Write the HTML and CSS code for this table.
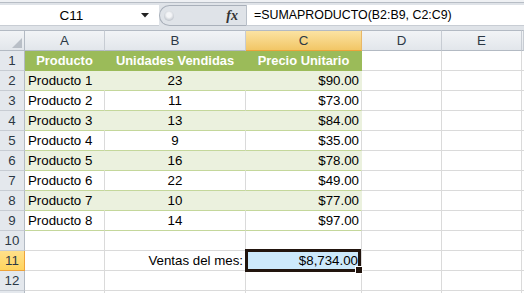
FILE: index.html
```html
<!DOCTYPE html>
<html lang="es">
<head>
<meta charset="utf-8">
<title>SUMAPRODUCTO</title>
<link rel="stylesheet" href="styles.css">
</head>
<body>
<div class="fbar">
  <div class="namebox">
    <span class="name">C11</span>
    <svg class="arrow" width="8" height="5" viewBox="0 0 8 5"><polygon points="0,0 8,0 4,4.5" fill="#222"/></svg>
  </div>
  <div class="splitter">
    <span class="grip"></span>
    <span class="fx">fx</span>
  </div>
  <div class="formula">=SUMAPRODUCTO(B2:B9, C2:C9)</div>
</div>
<div class="sheet">
  <div class="corner"><svg width="10" height="10" viewBox="0 0 10 10"><polygon points="10,0 10,10 0,10" fill="#b9bfc7"/></svg></div>
  <div class="h">A</div><div class="h">B</div><div class="h hsel">C</div><div class="h">D</div><div class="h">E</div><div class="h"></div>

  <div class="r">1</div><div class="c th">Producto</div><div class="c th">Unidades Vendidas</div><div class="c th">Precio Unitario</div><div class="c"></div><div class="c"></div><div class="c"></div>

  <div class="r">2</div><div class="c g">Producto 1</div><div class="c g ctr">23</div><div class="c g rt">$90.00</div><div class="c"></div><div class="c"></div><div class="c"></div>
  <div class="r">3</div><div class="c w">Producto 2</div><div class="c w ctr">11</div><div class="c w rt">$73.00</div><div class="c"></div><div class="c"></div><div class="c"></div>
  <div class="r">4</div><div class="c g">Producto 3</div><div class="c g ctr">13</div><div class="c g rt">$84.00</div><div class="c"></div><div class="c"></div><div class="c"></div>
  <div class="r">5</div><div class="c w">Producto 4</div><div class="c w ctr">9</div><div class="c w rt">$35.00</div><div class="c"></div><div class="c"></div><div class="c"></div>
  <div class="r">6</div><div class="c g">Producto 5</div><div class="c g ctr">16</div><div class="c g rt">$78.00</div><div class="c"></div><div class="c"></div><div class="c"></div>
  <div class="r">7</div><div class="c w">Producto 6</div><div class="c w ctr">22</div><div class="c w rt">$49.00</div><div class="c"></div><div class="c"></div><div class="c"></div>
  <div class="r">8</div><div class="c g">Producto 7</div><div class="c g ctr">10</div><div class="c g rt">$77.00</div><div class="c"></div><div class="c"></div><div class="c"></div>
  <div class="r">9</div><div class="c w">Producto 8</div><div class="c w ctr">14</div><div class="c w rt">$97.00</div><div class="c"></div><div class="c"></div><div class="c"></div>

  <div class="r">10</div><div class="c"></div><div class="c"></div><div class="c"></div><div class="c"></div><div class="c"></div><div class="c"></div>
  <div class="r rsel">11</div><div class="c"></div><div class="c rt">Ventas del mes:</div><div class="c rt sel">$8,734.00</div><div class="c"></div><div class="c"></div><div class="c"></div>
  <div class="r">12</div><div class="c"></div><div class="c"></div><div class="c"></div><div class="c"></div><div class="c"></div><div class="c"></div>
  <div class="r"></div><div class="c"></div><div class="c"></div><div class="c"></div><div class="c"></div><div class="c"></div><div class="c"></div>
</div>
</body>
</html>
```
FILE: styles.css
```css
* { box-sizing: border-box; }
html, body { margin: 0; padding: 0; }
body {
  width: 524px;
  height: 293px;
  overflow: hidden;
  background: #fff;
  font-family: "Liberation Sans", Arial, sans-serif;
  font-size: 13.3px;
  color: #000;
}

/* formula bar */
.fbar {
  display: flex;
  height: 30px;
  padding-top: 5px;
  padding-bottom: 4px;
  background: linear-gradient(#eef0f3 0 2px, #b7bdc5 2px 3px, #dfe3e8 3px);
}
.namebox {
  width: 159px;
  background: #fff;
  border-bottom: 1px solid #c8cdd4;
  display: flex;
  align-items: center;
  position: relative;
}
.name {
  width: 143px;
  text-align: center;
  font-size: 13.5px;
}
.arrow { margin-left: -2px; }
.splitter {
  width: 87px;
  display: flex;
  align-items: center;
  justify-content: space-between;
  background: #dfe3e8;
  border: 1px solid #a9b0ba;
  border-right: none;
  border-radius: 11px 0 0 11px;
  padding: 0 8px 0 4px;
}
.grip {
  width: 10px;
  height: 10px;
  border-radius: 50%;
  background: radial-gradient(circle at 50% 40%, #f4f5f7 0 30%, #c4c9d0 70%, #aab0b9 100%);
}
.fx {
  font-family: "Liberation Serif", "Times New Roman", serif;
  font-style: italic;
  font-weight: bold;
  font-size: 14px;
  color: #333;
}
.formula {
  flex: 1;
  background: #fff;
  border-left: 1px solid #b9c0c9;
  border-bottom: 1px solid #c8cdd4;
  padding-left: 7px;
  display: flex;
  align-items: center;
  font-size: 12.4px;
  white-space: nowrap;
}

/* sheet */
.sheet {
  display: grid;
  grid-template-columns: 25px 80px 141px 116px 80px 80px 2px;
  grid-template-rows: 21px repeat(13, 20px);
}
.corner, .h {
  background: linear-gradient(#f2f4f6, #e2e6eb);
  border-top: 1px solid #b3bac3;
  border-bottom: 1px solid #b3bac3;
  border-right: 1px solid #c7ccd3;
  color: #2c3845;
  display: flex;
  align-items: center;
  justify-content: center;
}
.corner {
  border-right-color: #b3bac3;
  align-items: flex-end;
  justify-content: flex-end;
  padding: 0 2px 2px 0;
}
.hsel {
  background: linear-gradient(#fbe3a2, #f2c666);
  border-bottom-color: #eea33a;
  border-right-color: #e9b867;
}
.r {
  background: #e4e8ed;
  border-right: 1px solid #b3bac3;
  border-bottom: 1px solid #c7ccd3;
  color: #2c3845;
  display: flex;
  align-items: center;
  justify-content: center;
}
.rsel {
  background: linear-gradient(#ffe08a, #ffd45e);
  border-right-color: #eea33a;
  border-bottom-color: #eea33a;
}
.c {
  border-right: 1px solid #dadada;
  border-bottom: 1px solid #dadada;
  display: flex;
  align-items: center;
  padding: 0 3px;
  white-space: nowrap;
  overflow: visible;
}
.th {
  background: #9bbb59;
  border-right-color: #9bbb59;
  border-bottom-color: #9bbb59;
  color: #fff;
  font-weight: bold;
  font-size: 12.9px;
  justify-content: center;
}
.g {
  background: #ebf1de;
  border-right-color: #ebf1de;
  border-bottom-color: #c4d79b;
}
.w {
  border-bottom-color: #c4d79b;
}
.ctr { justify-content: center; }
.rt { justify-content: flex-end; padding-right: 2px; }
.sel {
  position: relative;
  background: #cde9fb;
  padding-right: 3px;
}
.sel::after {
  content: "";
  position: absolute;
  left: -1px;
  right: 0;
  top: -2px;
  bottom: -2px;
  border: 3px solid #22150e;
}
.sel::before {
  content: "";
  position: absolute;
  right: -2px;
  bottom: -4px;
  width: 6px;
  height: 6px;
  background: #22150e;
  border: 1px solid #fff;
  z-index: 1;
}
```
